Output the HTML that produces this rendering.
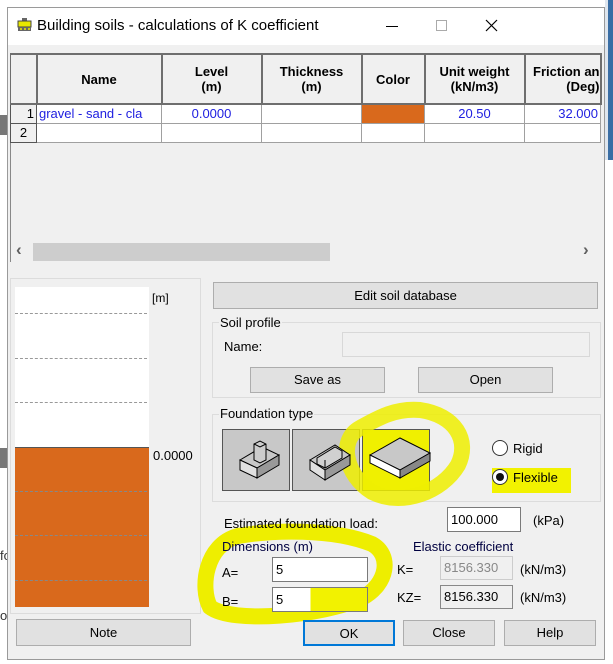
<!DOCTYPE html>
<html><head><style>
*{margin:0;padding:0;box-sizing:border-box}
body{width:613px;height:664px;background:#fff;position:relative;overflow:hidden;font-family:"Liberation Sans",Arial,sans-serif;font-size:13px;color:#000}
.a{position:absolute}
.win{left:7px;top:7px;width:598px;height:653px;background:#f0f0f0;border:1px solid #9a9a9a}
.btn{position:absolute;background:#e1e1e1;border:1px solid #adadad;text-align:center;font-size:13px}
.grp{position:absolute;border:1px solid #dcdcdc}
.inp{position:absolute;background:#fff;border:1px solid #7a7a7a;padding-left:3px;font-size:13px}
table{border-collapse:collapse;position:absolute;left:10px;top:53px}
td{border:1px solid #a0a0a0;font-size:13px;height:19px;padding:0 2px}
th{border:1px solid #6e6e6e;border-width:2px 2px 2px 1px;font-size:13px;background:#f0f0f0;height:50px;font-weight:bold}
</style></head><body>
<div class="a" style="left:0;top:115px;width:8px;height:20px;background:#777"></div>
<div class="a" style="left:0;top:448px;width:8px;height:20px;background:#777"></div>
<div class="a" style="left:0;top:548px;font-size:13px;color:#333">fo</div>
<div class="a" style="left:0;top:608px;font-size:13px;color:#333">or</div>
<div class="a" style="left:605px;top:0;width:8px;height:160px;background:#dfe6ee"></div>
<div class="a" style="left:608px;top:0;width:5px;height:160px;background:#3a6ea5"></div>
<div class="a win"></div>
<div class="a" style="left:8px;top:8px;width:596px;height:37px;background:#fff"></div>
<svg class="a" style="left:17px;top:17px" width="15" height="15"><rect x="5" y="1" width="5" height="3" fill="#666"/><rect x="1" y="4" width="13" height="6" fill="#e8e800" stroke="#444" stroke-width="1"/><rect x="1" y="10" width="13" height="4" fill="#666"/><circle cx="4" cy="12" r="1" fill="#ee0"/><circle cx="8" cy="12" r="1" fill="#ee0"/><circle cx="12" cy="12" r="1" fill="#ee0"/></svg>
<div class="a" style="left:37px;top:17px;font-size:15px;color:#000">Building soils - calculations of K coefficient</div>
<div class="a" style="left:386px;top:26px;width:12px;height:1px;background:#000"></div>
<div class="a" style="left:436px;top:20px;width:11px;height:11px;border:1px solid #aaa"></div>
<svg class="a" style="left:485px;top:19px" width="13" height="13"><path d="M1 1L12 12M12 1L1 12" stroke="#000" stroke-width="1.2"/></svg>

<div class="a" style="left:10px;top:53px;width:590px;height:209px;background:#f0f0f0;border-left:1px solid #888"></div>
<table>
<tr><th style="width:26px"></th><th style="width:125px">Name</th><th style="width:100px">Level<br>(m)</th><th style="width:100px">Thickness<br>(m)</th><th style="width:63px">Color</th><th style="width:100px">Unit weight<br>(kN/m3)</th><th style="width:76px;text-align:right;white-space:nowrap;overflow:hidden">Friction an<br>(Deg)</th></tr>
<tr><td style="background:#f0f0f0;text-align:right;border:1px solid #555">1</td><td style="color:#2020e0;background:#fff;white-space:nowrap">gravel - sand - cla</td><td style="color:#2020e0;text-align:center;background:#fff">0.0000</td><td style="background:#fff"></td><td style="background:#d9691c"></td><td style="color:#2020e0;text-align:center;background:#fff">20.50</td><td style="color:#2020e0;text-align:right;background:#fff">32.000</td></tr>
<tr><td style="background:#f0f0f0;text-align:center;border:1px solid #555">2</td><td style="background:#fff"></td><td style="background:#fff"></td><td style="background:#fff"></td><td style="background:#fff"></td><td style="background:#fff"></td><td style="background:#fff"></td></tr>
</table>
<div class="a" style="left:11px;top:242px;width:589px;height:20px;background:#f0f0f0"></div>
<div class="a" style="left:33px;top:243px;width:297px;height:18px;background:#cdcdcd"></div>
<div class="a" style="left:16px;top:240px;font-size:17px;color:#606060;font-weight:bold">&lsaquo;</div>
<div class="a" style="left:583px;top:240px;font-size:17px;color:#606060;font-weight:bold">&rsaquo;</div>

<div class="grp" style="left:10px;top:278px;width:191px;height:336px"></div>
<div class="a" style="left:15px;top:287px;width:134px;height:160px;background:#fff"></div>
<div class="a" style="left:15px;top:447px;width:134px;height:160px;background:#d9691c;border-top:1px solid #555"></div>
<div class="a" style="left:15px;top:313px;width:132px;border-top:1px dashed #999"></div>
<div class="a" style="left:15px;top:358px;width:132px;border-top:1px dashed #999"></div>
<div class="a" style="left:15px;top:402px;width:132px;border-top:1px dashed #999"></div>
<div class="a" style="left:15px;top:491px;width:132px;border-top:1px dashed #888"></div>
<div class="a" style="left:15px;top:535px;width:132px;border-top:1px dashed #888"></div>
<div class="a" style="left:15px;top:580px;width:132px;border-top:1px dashed #888"></div>
<div class="a" style="left:152px;top:291px;font-size:12px">[m]</div>
<div class="a" style="left:153px;top:448px;font-size:13px">0.0000</div>
<div class="btn" style="left:16px;top:619px;width:175px;height:27px;line-height:25px">Note</div>

<div class="btn" style="left:213px;top:282px;width:385px;height:27px;line-height:25px">Edit soil database</div>
<div class="grp" style="left:212px;top:322px;width:389px;height:76px"></div>
<div class="a" style="left:219px;top:315px;background:#f0f0f0;padding:0 1px;font-size:13px">Soil profile</div>
<div class="a" style="left:224px;top:339px;font-size:13px">Name:</div>
<div class="a" style="left:342px;top:332px;width:248px;height:25px;border:1px solid #d8d8d8;background:#f0f0f0"></div>
<div class="btn" style="left:250px;top:367px;width:135px;height:26px;line-height:24px">Save as</div>
<div class="btn" style="left:418px;top:367px;width:135px;height:26px;line-height:24px">Open</div>

<div class="grp" style="left:212px;top:414px;width:389px;height:88px"></div>
<div class="a" style="left:219px;top:406px;background:#f0f0f0;padding:0 1px;font-size:13px">Foundation type</div>
<div class="a" style="left:222px;top:429px;width:68px;height:62px;background:#c8c8c8;border:1px solid #555"></div>
<div class="a" style="left:292px;top:429px;width:68px;height:62px;background:#c8c8c8;border:1px solid #555"></div>
<div class="a" style="left:362px;top:429px;width:68px;height:62px;background:#f0f000;border:1px solid #555"></div>
<svg class="a" style="left:0;top:0" width="613" height="664">
<path d="M360 428C338 440 345 475 372 492C402 507 442 492 458 465C470 440 455 415 420 410C395 408 378 418 360 428Z" fill="none" stroke="#eeee00" stroke-width="16" opacity="0.85"/>
<path d="M238 536C205 545 200 588 210 607C232 624 322 616 362 598C388 584 392 555 372 544C332 528 272 530 238 536Z" fill="none" stroke="#eeee00" stroke-width="16"/>
<rect x="492" y="468" width="79" height="25" fill="#f2f200"/>
<g stroke="#000" stroke-width="1" fill="#c8c8c8">
<polygon points="240,460 262,447 279,455 257,468"/>
<polygon points="240,460 257,468 257,478 240,470" fill="#e0e0e0"/>
<polygon points="257,468 279,455 279,465 257,478" fill="#999"/>
<polygon points="254,444 260,441 266,444 266,460 260,463 254,460" fill="#ccc"/>
<polyline points="254,444 260,447 266,444 M260,447 L260,463" fill="none"/>
<polygon points="310,460 335,445 350,455 325,470"/>
<polygon points="310,460 325,470 325,480 310,470" fill="#e0e0e0"/>
<polygon points="325,470 350,455 350,465 325,480" fill="#999"/>
<polygon points="317,458 335,447 342,451 342,458 325,468 317,464" fill="#d0d0d0"/>
<line x1="325" y1="468" x2="325" y2="460"/>
<polygon points="370,455 400,438 430,453 400,470" fill="#c8c8c8"/>
<polygon points="370,455 400,470 400,478 370,463" fill="#fff"/>
<polygon points="400,470 430,453 430,461 400,478" fill="#888"/>
</g>
</svg>
<svg class="a" style="left:491px;top:439px" width="18" height="18"><circle cx="9" cy="9" r="7.5" fill="#fff" stroke="#333"/></svg>
<div class="a" style="left:513px;top:441px;font-size:13px">Rigid</div>
<svg class="a" style="left:491px;top:468px" width="18" height="18"><circle cx="9" cy="9" r="7.5" fill="#fff" stroke="#333"/><circle cx="9" cy="9" r="4" fill="#111"/></svg>
<div class="a" style="left:513px;top:470px;font-size:13px">Flexible</div>

<div class="a" style="left:224px;top:516px;font-size:13px">Estimated foundation load:</div>
<div class="inp" style="left:447px;top:507px;width:74px;height:25px;line-height:23px">100.000</div>
<div class="a" style="left:533px;top:513px;font-size:13px">(kPa)</div>
<div class="a" style="left:222px;top:539px;font-size:13px;color:#000040">Dimensions (m)</div>
<div class="a" style="left:413px;top:539px;font-size:13px;color:#000040">Elastic coefficient</div>
<div class="a" style="left:222px;top:565px;font-size:13px">A=</div>
<div class="inp" style="left:272px;top:557px;width:96px;height:25px;line-height:23px">5</div>
<div class="a" style="left:222px;top:594px;font-size:13px">B=</div>
<div class="inp" style="left:272px;top:587px;width:96px;height:25px;line-height:23px;background:linear-gradient(90deg,#fff 40%,#f2f200 40%)">5</div>
<div class="a" style="left:397px;top:562px;font-size:13px">K=</div>
<div class="inp" style="left:440px;top:556px;width:73px;height:24px;line-height:22px;background:#f0f0f0;border-color:#ccc;color:#888">8156.330</div>
<div class="a" style="left:520px;top:562px;font-size:13px">(kN/m3)</div>
<div class="a" style="left:397px;top:590px;font-size:13px">KZ=</div>
<div class="inp" style="left:440px;top:585px;width:73px;height:24px;line-height:22px;background:#f0f0f0;border-color:#888">8156.330</div>
<div class="a" style="left:520px;top:590px;font-size:13px">(kN/m3)</div>

<div class="btn" style="left:303px;top:620px;width:92px;height:26px;line-height:24px;border:2px solid #0078d7">OK</div>
<div class="btn" style="left:403px;top:620px;width:92px;height:26px;line-height:24px">Close</div>
<div class="btn" style="left:504px;top:620px;width:92px;height:26px;line-height:24px">Help</div>
</body></html>
